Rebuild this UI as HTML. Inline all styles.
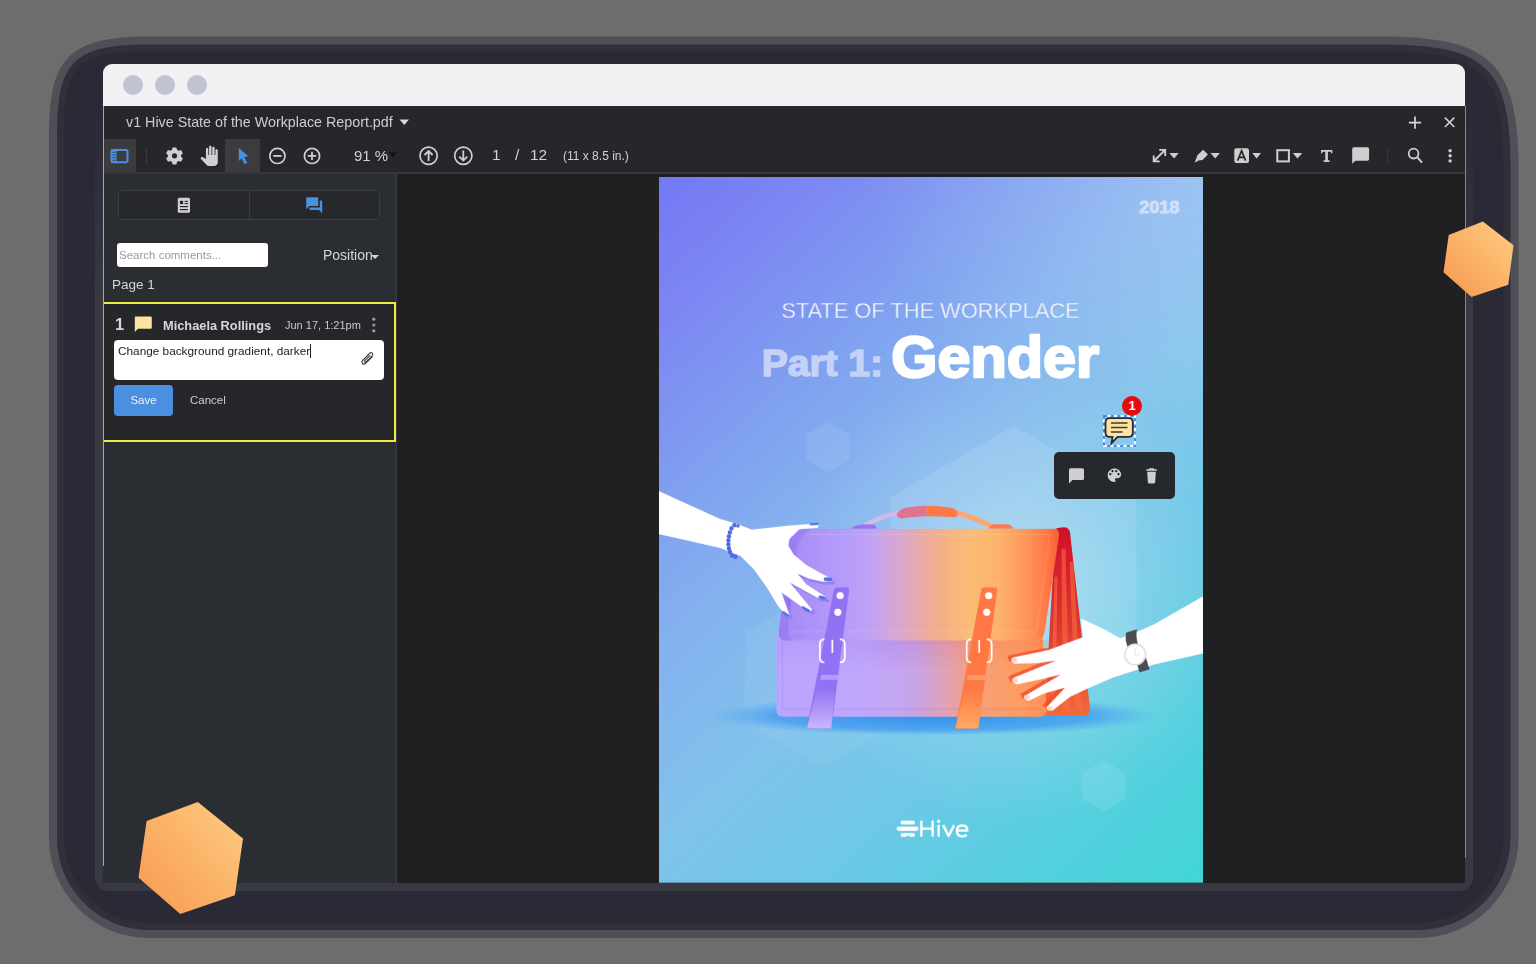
<!DOCTYPE html>
<html><head><meta charset="utf-8">
<style>
*{margin:0;padding:0;box-sizing:border-box}
html,body{width:1536px;height:964px;overflow:hidden;background:#6d6d6d;font-family:"Liberation Sans",sans-serif}
.a{position:absolute}
#ring{left:95px;top:110px;width:1378px;height:781px;border-radius:0 0 14px 14px;background:linear-gradient(180deg,rgba(57,57,68,0) 0px,#393944 200px)}
#rborder{left:1465px;top:106px;width:1px;height:752px;background:#85858a}
#titlebar{left:103px;top:64px;width:1362px;height:42px;background:#f1f1f3;border-radius:9px 9px 0 0}
.dot{width:20px;height:20px;border-radius:50%;background:#bfc4d1;top:75px}
#header{left:103px;top:106px;width:1362px;height:67px;background:#25272b}
#sep{left:103px;top:172px;width:1362px;height:2px;background:#35373b}
#sidebar{left:103px;top:174px;width:292px;height:709px;background:#2a2d32;border-right:2px solid #36383d;width:294px}
#main{left:397px;top:174px;width:1068px;height:709px;background:#202022}
#lborder{left:103px;top:106px;width:1px;height:760px;background:#a8a8aa}
.t{color:#d6d6d6;white-space:nowrap;will-change:transform}
</style></head><body>
<svg class="a" style="left:0;top:0" width="1536" height="964" viewBox="0 0 1536 964">
 <path d="M150,36.5 H1380 C1491.0,36.5 1518.5,62.8 1518.5,170 V838 A100,100 0 0 1 1418.5,938 H149 A100,100 0 0 1 49,838 V135 C49,57.1 69.3,36.5 150,36.5 Z" fill="#4f4f57"/>
 <path d="M150,44.5 H1380 C1487.0,44.5 1510.5,66.8 1510.5,170 V838 A92,92 0 0 1 1418.5,930 H149 A92,92 0 0 1 57,838 V135 C57,61.1 73.3,44.5 150,44.5 Z" fill="#30303b"/>
 <path d="M150,51.5 H1380 C1483.5,51.5 1503.5,70.3 1503.5,170 V838 A85,85 0 0 1 1418.5,923 H149 A85,85 0 0 1 64,838 V135 C64,64.6 76.8,51.5 150,51.5 Z" fill="#2a2a37"/>
</svg>
<div class="a" id="ring"></div>
<div class="a" id="titlebar"></div>
<div class="a dot" style="left:123px"></div>
<div class="a dot" style="left:155px"></div>
<div class="a dot" style="left:187px"></div>
<div class="a" id="header"></div>
<div class="a" id="sep"></div>
<div class="a" id="sidebar"></div>
<div class="a" id="main"></div>
<div class="a" id="rborder"></div>

<!-- title -->
<div class="a t" style="left:126px;top:114px;font-size:14.3px;color:#cdcdcd">v1 Hive State of the Workplace Report.pdf</div>


<!-- toolbar -->
<div class="a" style="left:104px;top:139px;width:32px;height:33px;background:#3c3c3e"></div>
<div class="a" style="left:225px;top:139px;width:35px;height:33px;background:#3c3c3e"></div>
<svg class="a" style="left:0;top:0" width="1536" height="200" viewBox="0 0 1536 200">
 <!-- sidebar toggle -->
 <rect x="111.5" y="150" width="16" height="12.2" rx="1.6" fill="none" stroke="#4a90e2" stroke-width="2"/>
 <rect x="111" y="149.5" width="5.5" height="13" fill="#4a90e2"/>
 <g stroke="#3c3c3e" stroke-width="0.9"><line x1="112.5" y1="152.3" x2="115.5" y2="152.3"/><line x1="112.5" y1="155" x2="115.5" y2="155"/><line x1="112.5" y1="157.7" x2="115.5" y2="157.7"/><line x1="112.5" y1="160.3" x2="115.5" y2="160.3"/></g>
 <line x1="146.6" y1="148.5" x2="146.6" y2="164.5" stroke="#3a3d42" stroke-width="1"/>
 <!-- gear -->
 <g transform="translate(174.5,155.8)" fill="#d0d0d0">
  <path id="gear" d="M-1.9,-8.4 h3.8 l0.6,2.4 l1.6,0.9 l2.4,-0.7 l1.9,3.3 l-1.8,1.7 v1.8 l1.8,1.7 l-1.9,3.3 l-2.4,-0.7 l-1.6,0.9 l-0.6,2.4 h-3.8 l-0.6,-2.4 l-1.6,-0.9 l-2.4,0.7 l-1.9,-3.3 l1.8,-1.7 v-1.8 l-1.8,-1.7 l1.9,-3.3 l2.4,0.7 l1.6,-0.9 z"/>
  <circle r="5.6"/>
  <circle r="2.6" fill="#25272b"/>
 </g>
 <!-- hand -->
 <g transform="translate(199.6,145.8) scale(0.79,0.84)" fill="#d0d0d0"><path d="M23 5.5V20c0 2.2-1.8 4-4 4h-7.3c-1.08 0-2.1-.43-2.85-1.19L1 14.83s1.26-1.23 1.3-1.25c.22-.19.49-.29.79-.29.22 0 .42.06.6.16.04.01 4.31 2.46 4.31 2.46V4c0-.83.67-1.5 1.5-1.5S11 3.17 11 4v7h1V1.5c0-.83.67-1.5 1.5-1.5S15 .67 15 1.5V11h1V2.5c0-.83.67-1.5 1.5-1.5s1.5.67 1.5 1.5V11h1V5.5c0-.83.67-1.5 1.5-1.5s1.5.67 1.5 1.5z"/></g>
 <!-- pointer -->
 <path d="M238.8,148 L248.3,156.2 L244.2,156.9 L247.2,163 L244.6,164.2 L241.7,158.2 L238.8,161 Z" fill="#4a90e2"/>
 <!-- zoom out/in -->
 <circle cx="277.4" cy="155.9" r="7.6" fill="none" stroke="#d0d0d0" stroke-width="1.7"/>
 <line x1="273.2" y1="155.9" x2="281.6" y2="155.9" stroke="#d0d0d0" stroke-width="1.8"/>
 <circle cx="312" cy="155.9" r="7.6" fill="none" stroke="#d0d0d0" stroke-width="1.7"/>
 <line x1="307.8" y1="155.9" x2="316.2" y2="155.9" stroke="#d0d0d0" stroke-width="1.8"/>
 <line x1="312" y1="151.7" x2="312" y2="160.1" stroke="#d0d0d0" stroke-width="1.8"/>
 <path d="M389,152.5 h7.5 l-3.75,5 z" fill="#111214"/>
 <!-- up/down -->
 <circle cx="428.6" cy="155.8" r="8.6" fill="none" stroke="#d0d0d0" stroke-width="1.7"/>
 <path d="M428.6,161 V151.3 M424.6,155 L428.6,151 L432.6,155" fill="none" stroke="#d0d0d0" stroke-width="1.8"/>
 <circle cx="463.3" cy="155.8" r="8.6" fill="none" stroke="#d0d0d0" stroke-width="1.7"/>
 <path d="M463.3,150.6 V160.3 M459.3,156.6 L463.3,160.6 L467.3,156.6" fill="none" stroke="#d0d0d0" stroke-width="1.8"/>
 <!-- title dropdown -->
 <path d="M399.5,119.5 h9.5 l-4.75,5.5 z" fill="#d8d8d8"/>
 <!-- + x -->
 <path d="M1415,116.5 V128.7 M1408.9,122.6 H1421.1" stroke="#d8d8d8" stroke-width="1.7"/>
 <path d="M1444.9,117.6 L1454.3,127 M1454.3,117.6 L1444.9,127" stroke="#d0d0d0" stroke-width="1.6"/>
 <!-- right tools -->
 <g fill="#cfcfcf">
  <path d="M1169.4,152.9 h9.3 l-4.65,5.7 z"/>
  <path d="M1210.5,152.9 h9.4 l-4.7,5.7 z"/>
  <path d="M1252.2,152.9 h8.8 l-4.4,5.7 z"/>
  <path d="M1292.8,152.9 h9.4 l-4.7,5.7 z"/>
 </g>
 <g stroke="#cfcfcf" stroke-width="1.9" fill="none">
  <path d="M1154.5,160.5 L1164.5,150.5 M1159.2,149.9 H1165.2 V155.9 M1153.7,155.4 V161.4 H1159.7"/>
 </g>
 <path d="M1203.2,149.8 L1207.9,154.5 L1202.5,160 L1198.6,160.6 L1194.7,162.8 L1196.2,158.5 L1197.4,155.3 Z" fill="#cfcfcf"/>
 <rect x="1234.3" y="148.2" width="14.7" height="14.8" rx="2" fill="#cfcfcf"/>
 <path d="M1237.6,160.6 L1241.6,150.8 L1245.6,160.6 M1239,157.3 H1244.2" stroke="#25272b" stroke-width="1.7" fill="none"/>
 <rect x="1277.3" y="150.2" width="11.6" height="11.2" fill="none" stroke="#cfcfcf" stroke-width="2"/>
 <path d="M1321,150 H1332.3 V153.3 H1331 V151.8 H1327.9 V160.3 H1329.6 V162 H1323.6 V160.3 H1325.3 V151.8 H1322.3 V153.3 H1321 Z" fill="#cfcfcf"/>
 <path d="M1354,147.3 H1367.3 Q1369.1,147.3 1369.1,149.1 V159 Q1369.1,160.8 1367.3,160.8 H1355.3 L1352.2,163.8 V149.1 Q1352.2,147.3 1354,147.3 Z" fill="#cfcfcf"/>
 <line x1="1387.6" y1="148.5" x2="1387.6" y2="164.5" stroke="#3a3d42" stroke-width="1"/>
 <circle cx="1413.6" cy="153.6" r="4.9" fill="none" stroke="#cfcfcf" stroke-width="1.8"/>
 <line x1="1417.2" y1="157.2" x2="1422" y2="162.6" stroke="#cfcfcf" stroke-width="2"/>
 <g fill="#cfcfcf"><circle cx="1450.1" cy="150.7" r="1.7"/><circle cx="1450.1" cy="155.8" r="1.7"/><circle cx="1450.1" cy="160.9" r="1.7"/></g>
</svg>
<div class="a t" style="left:353.5px;top:147px;font-size:15px;color:#d2d2d2">91 %</div>
<div class="a t" style="left:492px;top:146px;font-size:15.5px;color:#d2d2d2">1</div>
<div class="a t" style="left:515px;top:146px;font-size:15.5px;color:#d2d2d2">/</div>
<div class="a t" style="left:530px;top:146px;font-size:15.5px;color:#d2d2d2">12</div>
<div class="a t" style="left:563px;top:148.5px;font-size:12px;color:#d2d2d2">(11 x 8.5 in.)</div>


<!-- sidebar -->
<div class="a" style="left:118px;top:190px;width:262px;height:30px;border:1px solid #3a3d41;border-radius:4px;background:#26282c"></div>
<div class="a" style="left:249px;top:191px;width:1px;height:28px;background:#3a3d41"></div>
<svg class="a" style="left:0;top:180px" width="400" height="50" viewBox="0 180 400 50">
 <rect x="177.8" y="197.7" width="12.2" height="15.1" rx="1.5" fill="#d0d0d0"/>
 <g fill="#26282c">
  <rect x="179.9" y="200.8" width="3.2" height="3.3"/>
  <rect x="184.7" y="200.8" width="3.2" height="1.1"/>
  <rect x="184.7" y="203" width="3.2" height="1.1"/>
  <rect x="179.9" y="206" width="8" height="1.2"/>
  <rect x="179.9" y="209" width="8" height="1.2"/>
 </g>
 <g transform="translate(304.6,195.6) scale(0.8,0.8)" fill="#4a90e2"><path d="M21 6h-2v9H6v2c0 .55.45 1 1 1h11l4 4V7c0-.55-.45-1-1-1zm-4 6V3c0-.55-.45-1-1-1H3c-.55 0-1 .45-1 1v14l4-4h10c.55 0 1-.45 1-1z"/></g>
</svg>
<div class="a" style="left:117px;top:243px;width:151px;height:24px;background:#fff;border-radius:3px"></div>
<div class="a t" style="left:119px;top:249px;font-size:11.5px;color:#9a9a9a">Search comments...</div>
<div class="a t" style="left:323px;top:247px;font-size:14px;color:#d6d6d6">Position</div>
<svg class="a" style="left:370px;top:254px" width="12" height="6"><path d="M1,1 h8 l-4,4 z" fill="#d6d6d6"/></svg>
<div class="a t" style="left:112px;top:276.5px;font-size:13.5px;color:#d6d6d6">Page 1</div>

<div class="a" style="left:103px;top:302px;width:293px;height:140px;border:2.6px solid #efeb3e;border-left:none;background:#25272b"></div>
<div class="a t" style="left:114.5px;top:315px;font-size:16.5px;font-weight:bold;color:#d8d8d8">1</div>
<svg class="a" style="left:134px;top:316px" width="19" height="17" viewBox="0 0 19 17"><path d="M1.5,0.5 H16.5 Q17.8,0.5 17.8,1.8 V11.5 Q17.8,12.8 16.5,12.8 H4 L0.8,16 V1.8 Q0.8,0.5 1.5,0.5 Z" fill="#fde39f"/></svg>
<div class="a t" style="left:163px;top:317.5px;font-size:12.8px;font-weight:bold;color:#d8d8d8">Michaela Rollings</div>
<div class="a t" style="left:285px;top:318.5px;font-size:11px;color:#c8c8c8">Jun 17, 1:21pm</div>
<svg class="a" style="left:368px;top:315px" width="12" height="20"><g fill="#9c9c9c"><circle cx="5.8" cy="4.2" r="1.6"/><circle cx="5.8" cy="10" r="1.6"/><circle cx="5.8" cy="15.8" r="1.6"/></g></svg>
<div class="a" style="left:114px;top:340px;width:270px;height:40px;background:#fff;border-radius:4px"></div>
<div class="a t" style="left:118px;top:344px;font-size:11.8px;color:#222">Change background gradient, darker</div>
<div class="a" style="left:309.5px;top:344px;width:1px;height:14px;background:#222"></div>
<svg class="a" style="left:359px;top:350px" width="18" height="18" viewBox="0 0 18 18"><path d="M13.5,6.5 L7,13 Q5,15 3.5,13.5 Q2,12 4,10 L10.5,3.5 Q12,2 13.3,3.2 Q14.5,4.5 13,6 L7.3,11.7 Q6.3,12.7 5.6,12 Q5,11.3 6,10.3 L11,5.3" fill="none" stroke="#444" stroke-width="1.1"/></svg>
<div class="a" style="left:114px;top:385px;width:59px;height:31px;background:#4a8fe0;border-radius:4px"></div>
<div class="a t" style="left:114px;top:393.5px;width:59px;text-align:center;font-size:11.5px;color:#f2f2f2">Save</div>
<div class="a t" style="left:189.5px;top:393.5px;font-size:11.5px;color:#cfcfcf">Cancel</div>

<div class="a" id="lborder"></div>
<!-- PDF page -->
<svg class="a" style="left:659px;top:177.3px" width="544.4" height="705.7" viewBox="0 0 545 706" preserveAspectRatio="none">
<defs>
 <linearGradient id="bg" gradientUnits="userSpaceOnUse" x1="0" y1="0" x2="600" y2="650">
  <stop offset="0" stop-color="#7378f4"/>
  <stop offset="0.12" stop-color="#7d86f3"/>
  <stop offset="0.25" stop-color="#7f9cf0"/>
  <stop offset="0.4" stop-color="#84b2ef"/>
  <stop offset="0.55" stop-color="#80c2eb"/>
  <stop offset="0.7" stop-color="#6ec8e7"/>
  <stop offset="0.85" stop-color="#55cfdf"/>
  <stop offset="1" stop-color="#42d5d7"/>
 </linearGradient>
 <radialGradient id="glow" cx="360" cy="420" r="230" gradientUnits="userSpaceOnUse">
  <stop offset="0" stop-color="#fff" stop-opacity="0.38"/>
  <stop offset="0.5" stop-color="#fff" stop-opacity="0.15"/>
  <stop offset="1" stop-color="#fff" stop-opacity="0"/>
 </radialGradient>
 <radialGradient id="bagsh" cx="275" cy="539" r="225" gradientUnits="userSpaceOnUse" gradientTransform="translate(0,539) scale(1,0.09) translate(0,-539)">
  <stop offset="0" stop-color="#2f8cf0" stop-opacity="0.95"/>
  <stop offset="0.7" stop-color="#3b96f0" stop-opacity="0.7"/>
  <stop offset="1" stop-color="#4aa0f0" stop-opacity="0"/>
 </radialGradient>
 <linearGradient id="flap" gradientUnits="userSpaceOnUse" x1="117" y1="0" x2="411" y2="0">
  <stop offset="0" stop-color="#a486f4"/>
  <stop offset="0.22" stop-color="#b49cfb"/>
  <stop offset="0.32" stop-color="#c0a2f6"/>
  <stop offset="0.42" stop-color="#d8a8d0"/>
  <stop offset="0.5" stop-color="#eaaba4"/>
  <stop offset="0.58" stop-color="#f6b184"/>
  <stop offset="0.66" stop-color="#fbbc76"/>
  <stop offset="0.76" stop-color="#fdb26c"/>
  <stop offset="0.86" stop-color="#ff9458"/>
  <stop offset="0.93" stop-color="#ff7444"/>
  <stop offset="0.98" stop-color="#f25a32"/>
 </linearGradient>
 <linearGradient id="body" gradientUnits="userSpaceOnUse" x1="117" y1="0" x2="431" y2="0">
  <stop offset="0" stop-color="#bba4fc"/>
  <stop offset="0.3" stop-color="#c0a7fd"/>
  <stop offset="0.45" stop-color="#c8a4e4"/>
  <stop offset="0.55" stop-color="#e2a2b0"/>
  <stop offset="0.64" stop-color="#f8a078"/>
  <stop offset="0.78" stop-color="#fd9c62"/>
  <stop offset="0.9" stop-color="#ff8a55"/>
  <stop offset="1" stop-color="#f26a3c"/>
 </linearGradient>
 <linearGradient id="gus" x1="0" y1="0" x2="0" y2="1">
  <stop offset="0" stop-color="#d10f2c"/>
  <stop offset="0.5" stop-color="#dc3530"/>
  <stop offset="1" stop-color="#f06a3a"/>
 </linearGradient>
 <linearGradient id="hand" gradientUnits="userSpaceOnUse" x1="190" y1="0" x2="360" y2="0">
  <stop offset="0" stop-color="#d9a5d8"/>
  <stop offset="0.5" stop-color="#f08c6c"/>
  <stop offset="1" stop-color="#ff9660"/>
 </linearGradient>
 <linearGradient id="sideglow" x1="0" y1="0" x2="1" y2="0">
  <stop offset="0" stop-color="#fff" stop-opacity="0.12"/>
  <stop offset="1" stop-color="#fff" stop-opacity="0.02"/>
 </linearGradient>
 <radialGradient id="tr" cx="545" cy="0" r="330" gradientUnits="userSpaceOnUse">
  <stop offset="0" stop-color="#fff" stop-opacity="0.2"/>
  <stop offset="1" stop-color="#fff" stop-opacity="0"/>
 </radialGradient>
 <linearGradient id="fade" x1="0" y1="0" x2="0" y2="1">
  <stop offset="0" stop-color="#fff"/><stop offset="1" stop-color="#000"/>
 </linearGradient>
 <mask id="fadem"><rect x="118" y="463" width="272" height="30" fill="url(#fade)"/></mask>
 <linearGradient id="bodysh" x1="0" y1="0" x2="1" y2="0">
  <stop offset="0" stop-color="#7a50e0" stop-opacity="0.08"/>
  <stop offset="0.45" stop-color="#9048c0" stop-opacity="0.18"/>
  <stop offset="0.62" stop-color="#e04a60" stop-opacity="0.16"/>
  <stop offset="1" stop-color="#ff5030" stop-opacity="0.1"/>
 </linearGradient>
 <linearGradient id="lstrap" x1="0" y1="0" x2="0" y2="1">
  <stop offset="0" stop-color="#9272f4"/><stop offset="1" stop-color="#cbb6fd"/>
 </linearGradient>
 <linearGradient id="rstrap" x1="0" y1="0" x2="0" y2="1">
  <stop offset="0" stop-color="#ff7844"/><stop offset="1" stop-color="#ffaa66"/>
 </linearGradient>
</defs>
<rect width="545" height="706" fill="url(#bg)"/>
<rect width="545" height="706" fill="url(#glow)"/>
<rect width="545" height="706" fill="url(#tr)"/>
<!-- faint hexagons -->
<g fill="#fff">
 <path d="M169.2,245.3 L190.8,257.8 L190.8,282.8 L169.2,295.3 L147.6,282.8 L147.6,257.8 Z" fill-opacity="0.09"/>
 <path d="M355,249 L478,320 L478,462 L355,533 L232,462 L232,320 Z" fill-opacity="0.1"/>
 <path d="M164,411 L242,456 L242,546 L164,591 L86,546 L86,456 Z" fill-opacity="0.06"/>
 <path d="M445.4,583.7 L467.5,596.5 L467.5,622 L445.4,634.7 L423.3,622 L423.3,596.5 Z" fill-opacity="0.1"/>
</g>
<!-- 2018 -->
<text x="480.8" y="36.2" textLength="40" lengthAdjust="spacingAndGlyphs" font-family="Liberation Sans" font-weight="bold" font-size="16.6" fill="#cfe0f8" stroke="#cfe0f8" stroke-width="0.9" stroke-linejoin="round">2018</text>
<!-- titles -->
<text x="122.3" y="141.5" textLength="298.7" lengthAdjust="spacingAndGlyphs" font-family="Liberation Sans" font-size="22.6" fill="#f7f8fe" stroke="url(#bg)" stroke-width="0.4">STATE OF THE WORKPLACE</text>
<text x="102.8" y="199.4" textLength="121.5" lengthAdjust="spacingAndGlyphs" font-family="Liberation Sans" font-weight="bold" font-size="37.3" fill="#c4d2f8" stroke="#c4d2f8" stroke-width="1.5" stroke-linejoin="round">Part 1:</text>
<text x="232.5" y="199.6" textLength="208" lengthAdjust="spacingAndGlyphs" font-family="Liberation Sans" font-weight="bold" font-size="57.4" fill="#fff" stroke="#fff" stroke-width="2.4" stroke-linejoin="round">Gender</text>
<!-- bag shadow -->
<ellipse cx="275" cy="539" rx="228" ry="19" fill="url(#bagsh)"/>
<!-- handle -->
<path d="M205.7,349 Q222,340 240.5,335.5" fill="none" stroke="#d9b8e6" stroke-width="4.6" stroke-opacity="0.9"/>
<path d="M298.5,335.5 Q316,341 332,349" fill="none" stroke="#ffa66c" stroke-width="5"/>
<path d="M238,337 Q243,331 250,330.5 Q262,329 267.5,329 L267.5,339.5 Q257,339.8 244,341.5 Q239,342 238,337 Z" fill="#de7492"/>
<path d="M267.5,329 Q284,329 294,331.5 Q299.5,333 299,337.5 Q298.5,341 294,340.5 Q282,339.5 267.5,339.5 Z" fill="#ff7848"/>
<path d="M192,352 Q196,348 203,347.7 H214 Q217,348 218,352 Z" fill="#9d72f2"/>
<path d="M330,352 Q331,348 334,347.5 H349 Q353,348 355,352 Z" fill="#ff7a50"/>
<!-- gusset -->
<path d="M397,352 Q400,350.5 405,350.5 Q410.5,350.5 411.5,356 L431.5,532 Q432,539 425,539 H386 Z" fill="url(#gus)"/>
<g fill="#ff7040" fill-opacity="0.55">
 <path d="M403,372 L407,372 L411,533 L404,533 Z"/>
 <path d="M411,385 L415,385 L423,533 L417,533 Z"/>
 <path d="M396,400 L399,400 L397,533 L392,533 Z"/>
</g>
<path d="M384,533 L389,539.5 L393,533 L397,539.5 L401,533 L405,539.5 L409,533 L413,539.5 L417,533 L420,539 Z" fill="#ef6a3a"/>
<!-- body -->
<path d="M117.5,458 H384 L388,533 Q388,540 381,540 H124 Q117.5,540 117.5,533 Z" fill="url(#body)"/>
<!-- body shading under flap -->
<rect x="118" y="463" width="272" height="30" fill="url(#bodysh)" mask="url(#fadem)"/>
<!-- flap -->
<path d="M144,352 H395 Q401,352 400.5,358 L386,455 Q384.5,463.5 376,463.5 H127 Q119,463.5 120,455 L130.5,362 Q132,352 144,352 Z" fill="url(#flap)"/>
<path d="M120,455 L131,361 Q132.5,352 145,352 L152,352 Q140,358 138,372 L129,455 Q128.5,462 134,463.5 H127 Q119,463.5 120,455 Z" fill="#8f6ef2" fill-opacity="0.45"/>
<!-- stitching -->
<path d="M148,357.5 H391 L378,455 H131.5" fill="none" stroke="#fff" stroke-opacity="0.4" stroke-width="0.8" stroke-dasharray="1.4,1.6"/>
<path d="M123.5,466 V532.5 H384" fill="none" stroke="#5d43c8" stroke-opacity="0.4" stroke-width="0.8" stroke-dasharray="1.4,1.6"/>
<!-- left strap -->
<path d="M175,413 Q175.5,410.5 178,410.5 H188 Q190.5,410.5 190.3,413 L172.5,551.5 H148 Z" fill="#9272f4"/>
<path d="M158,512 H176 L172.5,551.5 H148 Z" fill="url(#lstrap)"/>
<path d="M162,498 H180 L179.5,503 H161.5 Z" fill="#b49cfb"/>
<circle cx="181.3" cy="418.8" r="3.6" fill="#fff"/>
<circle cx="179" cy="435.4" r="3.6" fill="#fff"/>
<path d="M165.5,462.5 Q161,462.5 161,467.5 V480.5 Q161,485.5 165.5,485.5 M181,462.5 Q186,462.5 186,467.5 V480.5 Q186,485.5 181,485.5 M173.5,463 V476" fill="none" stroke="#fff" stroke-width="1.7"/>
<!-- right strap -->
<path d="M322.5,413 Q323,410.5 325.5,410.5 H336 Q338.8,410.5 338.6,413 L319.5,551.5 H296.7 Z" fill="#ff7844"/>
<path d="M306,512 H325 L319.5,551.5 H296.7 Z" fill="url(#rstrap)"/>
<path d="M309,498 H329 L328.5,503 H308.5 Z" fill="#ff9a64"/>
<circle cx="330" cy="418.8" r="3.6" fill="#fff"/>
<circle cx="328" cy="435.4" r="3.6" fill="#fff"/>
<path d="M312.5,462.5 Q308,462.5 308,467.5 V480.5 Q308,485.5 312.5,485.5 M328,462.5 Q333,462.5 333,467.5 V480.5 Q333,485.5 328,485.5 M320.5,463 V476" fill="none" stroke="#fff" stroke-width="1.7"/>
<!-- left hand shadow on flap -->
<path d="M130.6,362 L129.4,368.8 L135.1,377.9 L147.7,388.2 L163.7,397.3 L173.4,401.9 L172.8,404.2 L163.7,404.7 L150,401.9 L138.6,396.7 L147.7,407.6 L167.1,420.1 L167.6,422.4 L159.1,421.3 L131.1,405.9 L153.4,432.7 L151.1,435 L143.1,430.4 L122.6,415.6 L130.6,438.4 L128.3,440.1 Z" fill="#8a68ee" fill-opacity="0.55" transform="translate(3,3)"/>
<!-- left hand -->
<path d="M0,314.2 L61,342 L78.1,347.1 L92.9,352.8 L129.4,348.8 L159.1,346.6 L159.7,348.3 L159.1,351.1 L140.8,352.3 L130.6,362 L129.4,368.8 L135.1,377.9 L147.7,388.2 L163.7,397.3 L173.4,401.9 L172.8,404.2 L163.7,404.7 L150,401.9 L138.6,396.7 L147.7,407.6 L167.1,420.1 L167.6,422.4 L159.1,421.3 L131.1,405.9 L153.4,432.7 L151.1,435 L143.1,430.4 L122.6,415.6 L130.6,438.4 L128.3,440.1 L119.2,429.3 L108.9,412.1 L95.2,392.8 L81.5,379.1 L61,371.1 L0,357.2 Z" fill="#fff"/>
<g fill="#5670e2">
 <path d="M151,346.4 L159.5,345.8 L159.8,348 L151,348.5 Z"/>
 <path d="M165,401 Q168,399.5 173.4,401.2 L173,404 Q168,404.8 165,403.5 Z"/>
 <path d="M160,419 Q163,418 167.6,420.5 L167,422.6 Q162,422.5 159.5,421 Z"/>
 <path d="M143.5,429 Q148,431 151.6,433.5 L150.5,435.5 Q146,434 143,431 Z"/>
 <path d="M124.5,434 Q128,436 130.8,438.5 L128.3,440.3 Q125.5,438 123.5,435.5 Z"/>
</g>
<g fill="#4f68e6">
 <circle cx="75.5" cy="348.2" r="2.2"/><circle cx="72.5" cy="351.5" r="2.2"/><circle cx="71" cy="355.5" r="2.2"/><circle cx="70" cy="359.5" r="2.2"/><circle cx="69.5" cy="363.5" r="2.2"/><circle cx="69.5" cy="367.5" r="2.2"/><circle cx="70" cy="371.5" r="2.2"/><circle cx="71" cy="375" r="2.2"/><circle cx="73" cy="378.5" r="2.2"/><circle cx="76.5" cy="380" r="2.2"/><circle cx="79" cy="349" r="1.8"/>
</g>
<!-- right hand shadow -->
<path d="M389.6,473.3 L358,479.8 Q351,481 353.6,483.7 Q354,487 356.9,486.9 L378.7,486.4 L397.2,483.7 L355.8,500.5 Q352,503 354.7,503.8 Q355,507 358,507.6 L380.9,502.7 L402.1,497.8 L367.8,518 Q364,520 366.2,520.1 Q367,524 370,524 L385.2,516.9 L406.5,510.9 L389.6,528.9 Q386,532 389,531.6 Q391,534 393.9,533.8 L411.4,520.1 L429.9,511.4 L429.9,470 Z" fill="#f04a28" fill-opacity="0.75" transform="translate(-4,-2)"/>
<!-- right hand -->
<path d="M545,419.3 L496,447.2 L476.7,455.9 L461.5,461.3 L444,451.5 L422.3,441.7 L424.4,460.2 L389.6,473.3 L358,479.8 Q351,481 353.6,483.7 Q354,487 356.9,486.9 L378.7,486.4 L397.2,483.7 L355.8,500.5 Q352,503 354.7,503.8 Q355,507 358,507.6 L380.9,502.7 L402.1,497.8 L367.8,518 Q364,520 366.2,520.1 Q367,524 370,524 L385.2,516.9 L406.5,510.9 L389.6,528.9 Q386,532 389,531.6 Q391,534 393.9,533.8 L411.4,520.1 L429.9,511.4 L454.9,500.5 L496,487.5 L545,476.6 Z" fill="#fff"/>
<g fill="#f3d8d2">
 <ellipse cx="355.6" cy="483.5" rx="3" ry="2.4"/>
 <ellipse cx="356.5" cy="503.8" rx="3" ry="2.4"/>
 <ellipse cx="368.3" cy="520.5" rx="3" ry="2.4"/>
 <ellipse cx="391.2" cy="531.5" rx="3" ry="2.4"/>
</g>
<!-- watch -->
<path d="M467.5,455.9 L478.4,452.5 Q477,461 480,469 L470,472 Q466,464 467.5,455.9 Z" fill="#4a4c52"/>
<path d="M477.8,484.2 L487.5,481 L491,492.5 L481,495.5 Z" fill="#4a4c52"/>
<circle cx="476.7" cy="477.7" r="10.4" fill="#fff" stroke="#dcdcdc" stroke-width="1.3"/>
<path d="M476.7,477.7 V471 M476.7,477.7 H481" stroke="#e2e2e2" stroke-width="0.9"/>
<!-- Hive logo -->
<g fill="#fff">
 <rect x="241.8" y="643.9" width="14.4" height="3.8" rx="1.9"/>
 <rect x="237.9" y="649.9" width="21.9" height="4.2" rx="2.1"/>
 <path d="M243.7,656.3 H254.3 Q256.2,656.3 256.2,658.2 Q256.2,660.2 254.3,660.2 H251.5 Q250,659 249,659 Q248,659 246.5,660.2 H243.7 Q241.8,660.2 241.8,658.2 Q241.8,656.3 243.7,656.3 Z"/>
</g>
<g fill="none" stroke="#fff" stroke-width="2.4" stroke-linejoin="round">
 <path d="M262.6,643.9 V659.9 M273.9,643.9 V659.9 M262.6,651.9 H273.9"/>
 <path d="M279.9,648 V659.9"/>
 <path d="M284.3,648.3 L289.9,659.3 L295.4,648.3"/>
 <path d="M298.4,653.8 H308.6 Q308.6,648.6 303.5,648.6 Q298.2,648.6 298.2,654.2 Q298.2,659.6 303.6,659.6 Q306.6,659.6 308,657.8"/>
</g>
<circle cx="279.9" cy="644.6" r="1.6" fill="#fff"/>
</svg>

<!-- annotation -->
<svg class="a" style="left:1103px;top:415px" width="33" height="32" viewBox="0 0 33 32">
 <rect x="1" y="1" width="31" height="30" fill="none" stroke="#fff" stroke-width="2.2"/>
 <rect x="1" y="1" width="31" height="30" fill="none" stroke="#3f8ef0" stroke-width="2.2" stroke-dasharray="3.3,3.3"/>
 <path d="M6.5,3.2 H25.8 Q29.8,3.2 29.8,7.2 V17.8 Q29.8,21.8 25.8,21.8 H14.5 L8.5,28.2 L9.5,21.8 H6.5 Q2.5,21.8 2.5,17.8 V7.2 Q2.5,3.2 6.5,3.2 Z" fill="#fde3a0" stroke="#2b2b2b" stroke-width="1.8"/>
 <path d="M8,8 H24.5 M8,12.5 H24.5 M8,17 H19.5" stroke="#3a3a3a" stroke-width="1.5"/>
</svg>
<div class="a" style="left:1122px;top:396px;width:20px;height:20px;border-radius:50%;background:#e8090c"></div>
<div class="a t" style="left:1122px;top:398px;width:20px;text-align:center;font-size:13px;font-weight:bold;color:#fff">1</div>
<div class="a" style="left:1053.5px;top:452px;width:121.5px;height:47px;background:#25282c;border-radius:5px"></div>
<svg class="a" style="left:1053px;top:452px" width="122" height="47" viewBox="0 0 122 47">
 <path d="M17.5,16.2 H29.5 Q31,16.2 31,17.7 V26.6 Q31,28.1 29.5,28.1 H19.5 L16,31.6 V17.7 Q16,16.2 17.5,16.2 Z" fill="#cfcfcf"/>
 <g transform="translate(52.4,14.3) scale(0.75)"><path d="M12 3c-4.97 0-9 4.03-9 9s4.03 9 9 9c.83 0 1.5-.67 1.5-1.5 0-.39-.15-.74-.39-1.01-.23-.26-.38-.61-.38-.99 0-.83.67-1.5 1.5-1.5H16c2.76 0 5-2.24 5-5 0-4.42-4.03-8-9-8zm-5.5 9c-.83 0-1.5-.67-1.5-1.5S5.67 9 6.5 9 8 9.67 8 10.5 7.33 12 6.5 12zm3-4C8.67 8 8 7.33 8 6.5S8.67 5 9.5 5s1.5.67 1.5 1.5S10.33 8 9.5 8zm5 0c-.83 0-1.5-.67-1.5-1.5S13.67 5 14.5 5s1.5.67 1.5 1.5S15.33 8 14.5 8zm3 4c-.83 0-1.5-.67-1.5-1.5S16.67 9 17.5 9s1.5.67 1.5 1.5-.67 1.5-1.5 1.5z" fill="#cfcfcf"/></g>
 <path d="M93.2,17.3 H103.8 V18.8 H93.2 Z M96,16.2 H101 V17.3 H96 Z M94.2,19.8 H102.8 L102.2,30.3 Q102.1,31.4 101,31.4 H96 Q94.9,31.4 94.8,30.3 Z" fill="#cfcfcf"/>
</svg>

<!-- orange hexagons -->
<svg class="a" style="left:0;top:0" width="1536" height="964" viewBox="0 0 1536 964">
<defs>
 <linearGradient id="og1" gradientUnits="userSpaceOnUse" x1="1445" y1="290" x2="1512" y2="228">
  <stop offset="0" stop-color="#f99a52"/><stop offset="1" stop-color="#fdca7e"/>
 </linearGradient>
 <linearGradient id="og2" gradientUnits="userSpaceOnUse" x1="140" y1="905" x2="243" y2="815">
  <stop offset="0" stop-color="#f99a52"/><stop offset="1" stop-color="#fdca7e"/>
 </linearGradient>
 <filter id="bl" x="-10%" y="-10%" width="120%" height="120%"><feGaussianBlur stdDeviation="0.6"/></filter>
</defs>
<path d="M1482.9,221.4 L1513.5,245.3 L1508.3,284.7 L1471.5,297.1 L1443.5,272.2 L1448.7,234.9 Z" fill="url(#og1)" filter="url(#bl)"/>
<path d="M197.8,802.1 L243,838.5 L234.9,895.2 L180.3,914.1 L138.5,877.7 L146.6,821 Z" fill="url(#og2)" filter="url(#bl)"/>
</svg>
</body></html>
